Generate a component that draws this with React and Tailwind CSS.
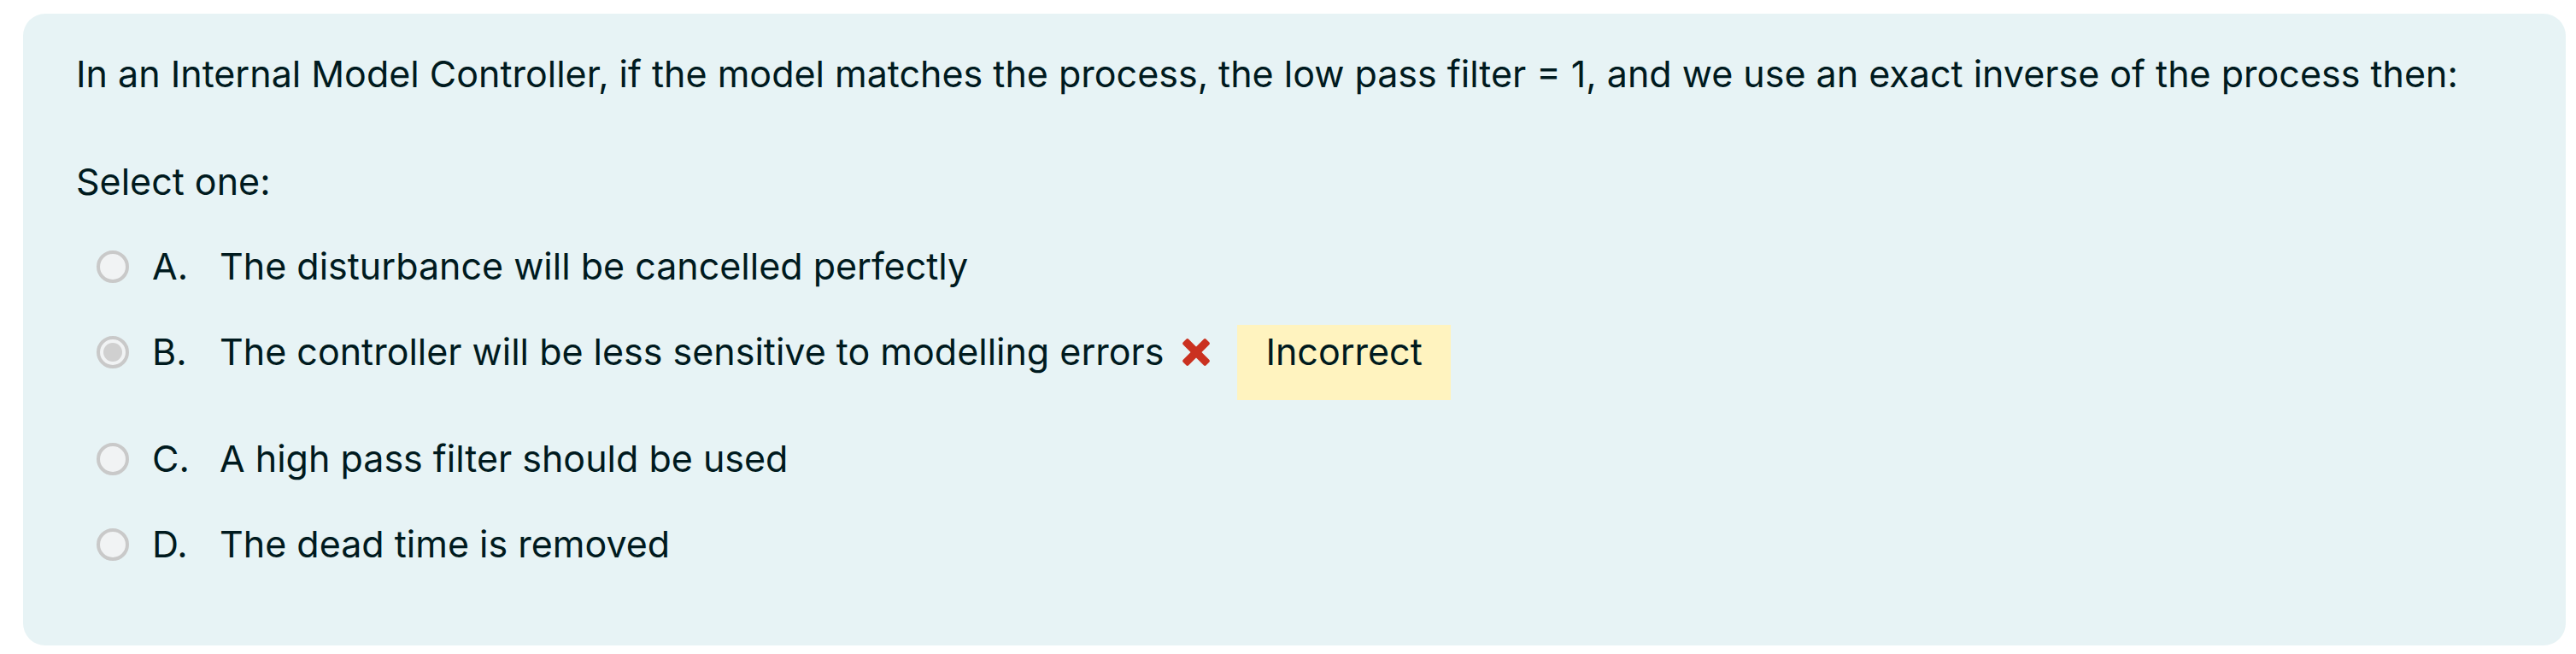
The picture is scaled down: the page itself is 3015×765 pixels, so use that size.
import React from 'react';

const options = [
  { key: 'a', label: 'A.', text: 'The disturbance will be cancelled perfectly' },
  { key: 'b', label: 'B.', text: 'The controller will be less sensitive to modelling errors', selected: true, incorrect: true },
  { key: 'c', label: 'C.', text: 'A high pass filter should be used' },
  { key: 'd', label: 'D.', text: 'The dead time is removed' },
];

const Radio = ({ checked }) => (
  <span className="flex h-[38px] w-[38px] shrink-0 items-center justify-center rounded-full border-[4px] border-[#c9c9c9] bg-[#f1f3f4]">
    {checked && <span className="h-[22px] w-[22px] rounded-full bg-[#d0d0d0]" />}
  </span>
);

const CrossIcon = () => (
  <svg className="h-[32px] w-[32px]" viewBox="0 0 32 32" fill="#ca3120">
    <rect x="-3" y="11.5" width="38" height="9" rx="2" transform="rotate(45 16 16)" />
    <rect x="-3" y="11.5" width="38" height="9" rx="2" transform="rotate(-45 16 16)" />
  </svg>
);

export default function App() {
  return (
    <div className="min-h-screen bg-white pt-[16px] pl-[27px] pr-[12px] pb-[10px]">
      <div
        className="rounded-[26px] bg-[#e7f3f5] pl-[62px] pt-[39px] pb-[68px] text-[43px] leading-[63px] text-[#001a1e]"
        style={{ fontFamily: 'Inter, "Noto Sans", sans-serif' }}
      >
        <p className="whitespace-nowrap">
          In an Internal Model Controller, if the model matches the process, the low pass filter = 1, and we use an exact inverse of the process then:
        </p>
        <p className="mt-[63px]">Select one:</p>

        <div className="mt-[18px]">
          {options.map((o) => (
            <div key={o.key} className="flex items-start pl-[24px] pt-[18px] pb-[19px]">
              <div className="flex h-[63px] items-center">
                <Radio checked={o.selected} />
              </div>
              <span className="ml-[27px] w-[79px] shrink-0">{o.label}</span>
              <span className="whitespace-nowrap">{o.text}</span>
              {o.incorrect && (
                <>
                  <span className="ml-[22px] flex h-[63px] items-center">
                    <CrossIcon />
                  </span>
                  <span className="ml-[32px] bg-[#fff3bf] px-[33px] pb-[25px]">Incorrect</span>
                </>
              )}
            </div>
          ))}
        </div>
      </div>
    </div>
  );
}
